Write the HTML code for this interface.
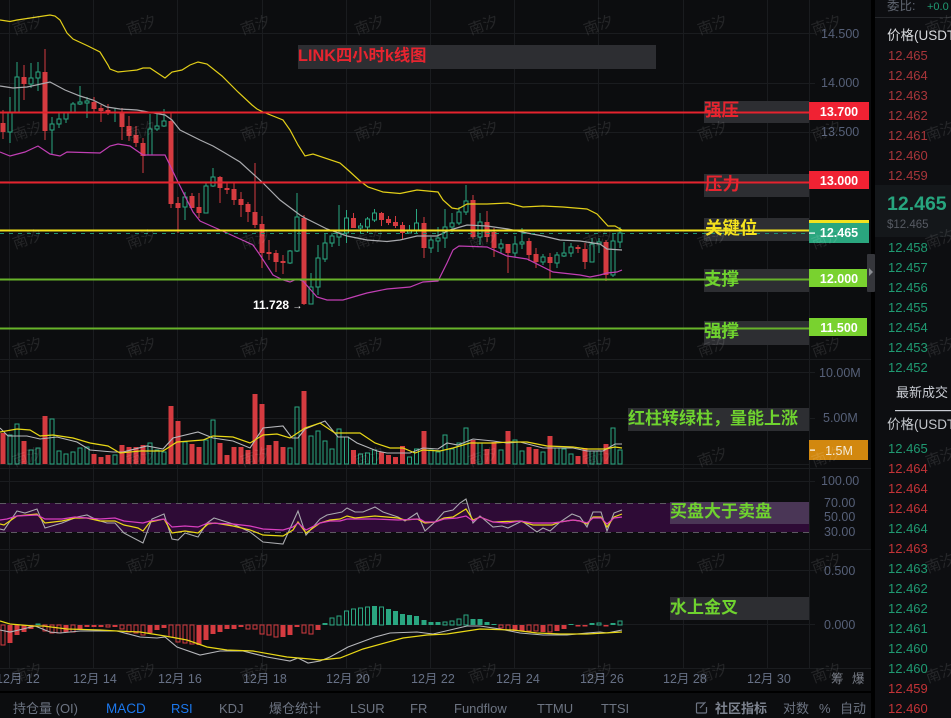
<!DOCTYPE html>
<html lang="zh"><head><meta charset="utf-8"><title>LINK</title>
<style>
html,body{margin:0;padding:0;background:#0c0d0f;overflow:hidden}
svg{display:block}
path{shape-rendering:crispEdges}
text{font-family:"Liberation Sans","Noto Sans CJK SC",sans-serif}
.ax{font-size:12.5px;fill:#566078}
.dt{font-size:12.5px;fill:#667085}
.tb{font-size:13px;fill:#6d7482}
.ob{font-size:13px}
.r{fill:#a8353a}.g{fill:#1f9a72}.r2{fill:#c23337}
.wm{font-size:15px;fill:#fff;fill-opacity:.1}
.an{font-size:17.5px;font-weight:700}
.lb{font-size:12.5px;font-weight:700;fill:#fff;text-anchor:middle}
</style></head><body>
<svg width="951" height="718" viewBox="0 0 951 718" xmlns="http://www.w3.org/2000/svg">
<rect width="951" height="718" fill="#0c0d0f"/>
<!-- grid -->
<path d="M9.5 0V668M93.5 0V668M177.5 0V668M262.5 0V668M346.5 0V668M430.5 0V668M514.5 0V668M598.5 0V668M683.5 0V668M767.5 0V668M809.5 0V668" stroke="#1a1c1f" fill="none"/>
<path d="M0 33.5H815M0 83.5H815M0 132.5H815M0 181.5H809M0 359.5H871M0 372.5H815M0 418.5H815M0 464.5H809M0 468.5H871M0 481.5H815M0 549.5H871M0 570.5H815M0 624.5H815M0 668.5H871" stroke="#1a1c1f" fill="none"/>
<!-- right/bottom dividers -->
<rect x="871" y="0" width="4" height="718" fill="#000"/>
<rect x="0" y="691" width="871" height="2" fill="#000"/>
<!-- RSI band -->
<rect x="0" y="503" width="809" height="29" fill="#2e0b36"/>
<path d="M0 503.5H809M0 532.5H809" stroke="#5d5a62" stroke-dasharray="6 5" fill="none"/>
<!-- annotation boxes -->
<g fill="#2d2e32">
<rect x="298" y="45" width="358" height="24"/>
<rect x="704" y="101" width="105" height="22"/>
<rect x="704" y="174" width="105" height="23"/>
<rect x="704" y="218" width="105" height="23"/>
<rect x="704" y="269" width="105" height="23"/>
<rect x="704" y="321" width="105" height="24"/>
<rect x="628" y="408" width="181" height="23"/>
<rect x="670" y="597" width="139" height="23"/>
</g>
<rect x="670" y="502" width="139" height="22" fill="#4a3656"/>
<!-- candles -->
<path fill="none" stroke="#2aa681" stroke-width="1.1" d="M10 97V143M17 62V113M31 63V88M38 62V91M52 117V154M59 113V128M66 112V123M73 102V113M80 86V105M87 97V118M115 108V122M150 114V155M157 113V131M164 109V127M185 192V220M206 183V213M213 168V187M290 250V264M297 193V252M311 273V304M318 245V295M325 233V262M332 233V247M339 205V246M346.5 210V243M360.5 223V233M367.5 217V233M374.5 209V222M409.5 225V233M416.5 209V233M431 237V253M438 227V252M445 209V248M452 213V232M459 207V225M466 185V215M480 213V245M501 239V253M515 236V257M522 228V249M543 254V265M557 252V268M564 242V257M571 243V257M592 238V262M599 238V253M613 233V277M620 227V248"/>
<path fill="#0c0d0f" stroke="#2aa681" stroke-width="1.1" d="M8 113h4v19h-4zM15 77h4v35h-4zM29 78h4v6h-4zM36 72h4v6h-4zM50 124h4v6h-4zM57 119h4v5h-4zM64 113h4v6h-4zM71 104h4v8h-4zM78 102h4v2h-4zM85 101h4v2h-4zM113 112h4v1h-4zM148 129h4v26h-4zM155 126h4v3h-4zM162 121h4v5h-4zM183 197h4v10h-4zM204 186h4v27h-4zM211 177h4v9h-4zM288 251h4v12h-4zM295 217h4v34h-4zM309 287h4v17h-4zM316 258h4v29h-4zM323 243h4v16h-4zM330 236h4v7h-4zM337 233h4v4h-4zM344.5 218h4v15h-4zM358.5 226h4v2h-4zM365.5 219h4v8h-4zM372.5 213h4v7h-4zM407.5 230h4v3h-4zM414.5 223h4v7h-4zM429 240h4v8h-4zM436 238h4v3h-4zM443 227h4v11h-4zM450 223h4v4h-4zM457 212h4v11h-4zM464 201h4v11h-4zM478 222h4v15h-4zM499 244h4v4h-4zM513 244h4v9h-4zM520 242h4v2h-4zM541 257h4v5h-4zM555 255h4v8h-4zM562 253h4v3h-4zM569 247h4v6h-4zM590 244h4v18h-4zM597 242h4v2h-4zM611 241h4v34h-4zM618 233h4v9h-4z"/>
<path fill="none" stroke="#d53b40" stroke-width="1.1" d="M3 110V139M24 65V100M45 49V140M94 97V113M101 105V122M108 104V115M122 108V140M129 116V141M136 126V147M143 138V173M171 113V208M178 197V233M192 193V208M199 193V218M220 176V203M227 182V194M234 182V205M241 192V217M248 202V222M255 163V228M262 216V268M269 240V260M276 250V272M283 255V274M304 215V305M353.5 213V228M381.5 212V226M388.5 216V225M395.5 216V228M402.5 222V240M424 217V258M473 195V239M487 211V242M494 228V257M508 244V273M529 238V261M536 248V268M550 253V279M578 245V253M585 243V269M606 240V281"/>
<path fill="#d53b40" d="M.5 123h5v9h-5zM21.5 77h5v7h-5zM42.5 72h5v59h-5zM91.5 102h5v7h-5zM98.5 108h5v3h-5zM105.5 110h5v2h-5zM119.5 112h5v15h-5zM126.5 126h5v10h-5zM133.5 135h5v8h-5zM140.5 143h5v13h-5zM168.5 121h5v83h-5zM175.5 203h5v5h-5zM189.5 196h5v12h-5zM196.5 207h5v6h-5zM217.5 177h5v11h-5zM224.5 188h5v2h-5zM231.5 189h5v11h-5zM238.5 199h5v6h-5zM245.5 204h5v8h-5zM252.5 212h5v13h-5zM259.5 224h5v29h-5zM266.5 252h5v2h-5zM273.5 253h5v9h-5zM280.5 261h5v2h-5zM301.5 218h5v86h-5zM351 218h5v10h-5zM379 213h5v7h-5zM386 219h5v4h-5zM393 222h5v4h-5zM400 225h5v8h-5zM421.5 223h5v25h-5zM470.5 200h5v37h-5zM484.5 222h5v15h-5zM491.5 232h5v16h-5zM505.5 244h5v9h-5zM526.5 241h5v14h-5zM533.5 254h5v8h-5zM547.5 257h5v6h-5zM575.5 247h5v2h-5zM582.5 249h5v13h-5zM603.5 242h5v33h-5z"/>
<!-- BOLL -->
<polyline fill="none" stroke="#e3cf18" stroke-width="1.2" points="0,20 10,21.5 17,20 50,15 55,16 60,20 67,33 73,39 88,46 100,52 108,65 110,69 118,72 137,70 143,68 150,68 165,78 172,72 182,70 190,65 198,62 207,64 222,76 238,92 252,105 257,109 263,112 283,120 290,130 298,145 305,156 313,154 340,163 348,170 360,181 368,187 383,192 400,193.5 417,190 438,192 443,200 452,208 458,209 467,204 487,204 508,203 523,207 543,206 563,207 587,209 597,214 608,226 615,226 622,230"/>
<polyline fill="none" stroke="#a9aaae" stroke-width="1.2" points="0,86 13,88 27,87 50,82 65,90 80,96 93,100 107,107 120,109 137,110 165,115 172,120 180,130 200,140 213,146 225,153 240,162 262,182 280,200 300,215 305,218 327,229 347,236 367,240 387,241.5 400,240 417,236 437,236 450,230 467,225 487,226 508,229 527,233 543,236 560,240 580,241 600,244 607,249 622,250"/>
<polyline fill="none" stroke="#c13fb4" stroke-width="1.2" points="0,152 10,156 25,152 38,146 50,154 60,156 67,152 100,153 110,146 118,144 130,146 143,155 165,155 177,180 193,212 200,221 227,233 253,245 260,255 273,275 283,280 290,282 297,279 303,281 317,297 327,300 343,300 360,295 367,293 387,289 410,287 423,282 438,281 447,263 453,250 459,246 487,247 507,256 527,259 553,272 580,275 590,277 600,275 607,273 617,272 622,270"/>
<!-- level lines -->
<path d="M0 230.5H809" stroke="#f2e11d" stroke-width="2" fill="none"/>
<path d="M0 233.5H809" stroke="#1d8f70" stroke-dasharray="4 5" fill="none"/>
<path d="M0 112.5H809M0 182.5H809" stroke="#e5232e" stroke-width="2" fill="none"/>
<path d="M0 279.5H809M0 328.5H809" stroke="#67b32a" stroke-width="2" fill="none"/>
<text x="253" y="309" font-size="12" font-weight="700" fill="#fff">11.728 <tspan font-size="10">→</tspan></text>
<!-- volume -->
<path fill="#d53b40" d="M.5 433h5V464h-5zM21.5 441h5V464h-5zM42.5 416h5V464h-5zM91.5 454h5V464h-5zM98.5 457h5V464h-5zM105.5 455h5V464h-5zM119.5 445h5V464h-5zM126.5 447h5V464h-5zM133.5 447h5V464h-5zM140.5 445h5V464h-5zM168.5 406h5V464h-5zM175.5 421h5V464h-5zM189.5 444h5V464h-5zM196.5 447h5V464h-5zM217.5 443h5V464h-5zM224.5 455h5V464h-5zM231.5 447h5V464h-5zM238.5 447h5V464h-5zM245.5 450h5V464h-5zM252.5 394h5V464h-5zM259.5 404h5V464h-5zM266.5 445h5V464h-5zM273.5 441h5V464h-5zM280.5 447h5V464h-5zM301.5 391h5V464h-5zM351 450h5V464h-5zM379 452h5V464h-5zM386 455h5V464h-5zM393 457h5V464h-5zM400 446h5V464h-5zM421.5 431h5V464h-5zM470.5 440h5V464h-5zM484.5 449h5V464h-5zM491.5 442h5V464h-5zM505.5 431h5V464h-5zM526.5 447h5V464h-5zM533.5 449h5V464h-5zM547.5 436h5V464h-5zM575.5 456h5V464h-5zM582.5 448h5V464h-5zM603.5 444h5V464h-5z"/>
<path fill="none" stroke="#2aa681" stroke-width="1.1" d="M8 435h4V464h-4zM15 424h4V464h-4zM29 450h4V464h-4zM36 448h4V464h-4zM50 419h4V464h-4zM57 451h4V464h-4zM64 454h4V464h-4zM71 452h4V464h-4zM78 448h4V464h-4zM85 447h4V464h-4zM113 455h4V464h-4zM148 443h4V464h-4zM155 450h4V464h-4zM162 452h4V464h-4zM183 442h4V464h-4zM204 440h4V464h-4zM211 420h4V464h-4zM288 448h4V464h-4zM295 407h4V464h-4zM309 436h4V464h-4zM316 431h4V464h-4zM323 441h4V464h-4zM330 449h4V464h-4zM337 429h4V464h-4zM344.5 437h4V464h-4zM358.5 454h4V464h-4zM365.5 453h4V464h-4zM372.5 450h4V464h-4zM407.5 457h4V464h-4zM414.5 449h4V464h-4zM429 450h4V464h-4zM436 452h4V464h-4zM443 435h4V464h-4zM450 449h4V464h-4zM457 443h4V464h-4zM464 428h4V464h-4zM478 443h4V464h-4zM499 450h4V464h-4zM513 440h4V464h-4zM520 451h4V464h-4zM541 452h4V464h-4zM555 448h4V464h-4zM562 449h4V464h-4zM569 454h4V464h-4zM590 451h4V464h-4zM597 451h4V464h-4zM611 428h4V464h-4zM618 450h4V464h-4z"/>
<polyline fill="none" stroke="#b6b7bb" stroke-width="1.1" points="0,428 8,436 27,436 40,439 57,437 77,442 90,450 113,452 123,452 147,446 163,449 173,438 198,432 213,438 233,441 250,448 263,428 283,426 292,438 298,438 305,429 320,423 325,421 338,437 348,437 357,443 377,451 387,453 410,453 423,448 438,449 447,443 458,445 473,439 493,441 507,443 520,442 543,448 573,448 587,451 603,451 615,444 622,444"/>
<polyline fill="none" stroke="#e9d816" stroke-width="1.2" points="0,432 17,429 30,430 40,436 53,435 73,438 90,443 108,446 120,453 140,451 163,451 177,442 203,440 213,436 233,437 250,443 263,435 277,434 290,438 305,428 320,423 335,433 360,433 375,443 390,448 403,448 415,453 423,450 440,451 453,448 470,443 493,443 510,442 527,442 547,446 573,447 587,449 605,449 615,447 622,448"/>
<!-- RSI lines -->
<polyline fill="none" stroke="#a9aaae" stroke-width="1.1" points="0,529 4,530 17,511 25,513 37,509 45,528 62,523 77,517 87,515 97,520 107,523 115,523 124,533 143,543 152,519 164,514 172,539 178,540 185,533 198,537 207,523 214,518 233,524 250,532 263,542 283,544 298,511 306,535 320,519 327,515 342,512 347,508 355,512 363,512 375,507 383,512 398,517 405,521 417,513 425,531 435,522 444,512 453,510 460,503 466,499 473,523 480,516 493,527 502,526 508,528 522,521 537,532 543,528 550,531 560,522 572,514 580,517 587,527 593,512 601,512 607,531 614,513 622,510"/>
<polyline fill="none" stroke="#e9d816" stroke-width="1.2" points="0,524 4,525 17,516 37,514 45,523 62,521 75,518 87,518 100,521 115,521 124,525 138,528 143,531 150,522 164,519 172,533 185,531 198,533 208,524 215,523 233,526 250,530 263,535 283,536 293,530 298,522 306,533 320,523 330,520 340,519 347,516 355,518 375,516 398,518 405,520 417,519 425,523 435,522 444,518 453,517 466,509 473,520 480,517 493,522 520,521 533,525 552,525 560,522 573,520 580,521 587,524 593,517 601,517 607,527 614,517 622,514"/>
<polyline fill="none" stroke="#d93fc0" stroke-width="1.2" points="0,520 7,519 17,516 37,515 45,519 62,519 75,517 87,518 100,519 115,518 124,521 143,523 150,521 164,519 172,527 185,526 198,527 208,523 233,524 250,526 263,529 283,530 293,527 298,523 306,530 320,523 330,521 340,521 347,519 375,519 398,520 420,519 425,522 435,522 444,519 457,518 466,516 473,521 480,517 493,522 507,523 520,521 533,523 552,523 560,522 573,520 580,521 587,523 593,518 601,518 607,524 614,518 622,517"/>
<!-- MACD hist -->
<path fill="#d53b40" d="M7.5 625h5v18h-5zM14.5 625h5v10h-5zM21.5 625h5v7h-5zM28.5 625h5v4h-5zM63.5 625h5v7h-5zM77.5 625h5v5h-5zM84.5 625h5v2h-5zM91.5 625h5v2h-5zM98.5 625h5v2h-5zM112.5 625h5v2h-5zM147.5 625h5v8h-5zM154.5 625h5v5h-5zM161.5 625h5v3h-5zM196.5 625h5v20h-5zM203.5 625h5v15h-5zM210.5 625h5v9h-5zM217.5 625h5v7h-5zM224.5 625h5v4h-5zM231.5 625h5v4h-5zM238.5 625h5v2h-5zM280.5 625h5v12h-5zM287.5 625h5v10h-5zM294.5 625h5v2h-5zM315.5 625h5v5h-5zM512.5 625h5v6h-5zM519.5 625h5v6h-5zM540.5 625h5v7h-5zM554.5 625h5v6h-5zM561.5 625h5v4h-5zM575.5 625h5v1.5h-5zM582.5 625h5v1.5h-5zM603.5 625h5v1.5h-5z"/>
<path fill="none" stroke="#d53b40" stroke-width="1.1" d="M1 625h4v20h-4zM43 625h4v6h-4zM50 625h4v8h-4zM57 625h4v8h-4zM71 625h4v7h-4zM106 625h4v2h-4zM120 625h4v4h-4zM127 625h4v7h-4zM134 625h4v8h-4zM141 625h4v10h-4zM169 625h4v12h-4zM176 625h4v17h-4zM183 625h4v18h-4zM190 625h4v19h-4zM246 625h4v4h-4zM253 625h4v4h-4zM260 625h4v9h-4zM267 625h4v10h-4zM274 625h4v12h-4zM302 625h4v8h-4zM309 625h4v9h-4zM499 625h4v3h-4zM506 625h4v5h-4zM527 625h4v6h-4zM534 625h4v6h-4zM548 625h4v7h-4z"/>
<path fill="#2aa681" d="M35.5 623.5h5v1.5h-5zM322.5 623h5v2h-5zM372 606h5v19h-5zM386 609h5v16h-5zM393 611h5v14h-5zM400 614h5v11h-5zM407 615h5v10h-5zM414 616h5v9h-5zM421.5 620h5v5h-5zM428.5 622h5v3h-5zM435.5 622h5v3h-5zM470.5 619h5v6h-5zM477.5 619h5v6h-5zM484.5 622h5v3h-5zM491.5 624h5v1h-5zM568.5 624h5v1h-5zM589.5 623h5v2h-5zM610.5 623h5v2h-5z"/>
<path fill="none" stroke="#2aa681" stroke-width="1.1" d="M330 618h4v7h-4zM337 616h4v9h-4zM344.5 611h4v14h-4zM351.5 609h4v16h-4zM358.5 608h4v17h-4zM365.5 607h4v18h-4zM379.5 607h4v18h-4zM443 622h4v3h-4zM450 621h4v4h-4zM457 619h4v6h-4zM464 615h4v10h-4zM597 623h4v2h-4zM618 621h4v4h-4z"/>
<polyline fill="none" stroke="#b6b7bb" stroke-width="1.1" points="0,630 10,632 23,629 35,626 50,632 60,633 80,631 117,631 140,637 157,638 165,637 177,647 200,655 220,651 243,651 267,657 290,661 298,658 308,663 320,661 330,657 348,647 375,637 390,633 417,632 433,634 467,626 480,626 500,629 520,633 543,635 567,635 587,633 600,632 607,633 622,630"/>
<polyline fill="none" stroke="#e9d816" stroke-width="1.2" points="0,621 10,624 33,626 43,626 67,629 100,630 117,631 140,632 165,636 187,640 207,647 227,650 253,651 287,657 310,659 320,660 340,658 363,649 403,638 427,635 447,634 480,629 513,630 537,633 560,634 587,634 622,632"/>
<!-- annotations text -->
<text x="298" y="61" class="an" fill="#e8242f" style="font-size:16.3px">LINK四小时k线图</text>
<text x="704" y="116" class="an" fill="#e8242f">强压</text>
<text x="705" y="190" class="an" fill="#e8242f">压力</text>
<text x="705" y="234" class="an" fill="#f3e21e">关键位</text>
<text x="704" y="285" class="an" fill="#6fd32f">支撑</text>
<text x="704" y="337" class="an" fill="#6fd32f">强撑</text>
<text x="628" y="424" class="an" fill="#6fd32f" style="font-size:17px">红柱转绿柱，量能上涨</text>
<text x="670" y="517" class="an" fill="#6fd32f" style="font-size:17px">买盘大于卖盘</text>
<text x="670" y="613" class="an" fill="#6fd32f" style="font-size:17px">水上金叉</text>
<!-- axis labels -->
<text x="821" y="38" class="ax">14.500</text>
<text x="821" y="87" class="ax">14.000</text>
<text x="821" y="136" class="ax">13.500</text>
<text x="819" y="377" class="ax">10.00M</text>
<text x="823" y="422" class="ax">5.00M</text>
<text x="821" y="485" class="ax">100.00</text>
<text x="824" y="507" class="ax">70.00</text>
<text x="824" y="521" class="ax">50.00</text>
<text x="824" y="536" class="ax">30.00</text>
<text x="824" y="575" class="ax">0.500</text>
<text x="824" y="629" class="ax">0.000</text>
<!-- price labels -->
<rect x="809" y="102" width="60" height="18" fill="#f02233"/><text x="839" y="116" class="lb">13.700</text>
<rect x="809" y="171" width="60" height="18" fill="#f02233"/><text x="839" y="185" class="lb">13.000</text>
<rect x="809" y="220" width="60" height="3" fill="#f3e21e"/>
<rect x="809" y="223" width="60" height="20" fill="#2aa67e"/><text x="839" y="237" class="lb">12.465</text>
<rect x="809" y="232.5" width="6" height="1.2" fill="#fff"/>
<rect x="809" y="269" width="58" height="18" fill="#79d22f"/><text x="839" y="283" class="lb">12.000</text>
<rect x="809" y="318" width="58" height="18" fill="#79d22f"/><text x="839" y="332" class="lb">11.500</text>
<rect x="809" y="440" width="59" height="20" fill="#d2880f"/><rect x="810" y="449.5" width="5" height="1.2" fill="#fff"/><text x="839" y="455" class="lb" style="font-weight:400;fill:#f3ead8">1.5M</text>
<!-- handle -->
<rect x="867" y="254" width="8" height="38" rx="1" fill="#35363b"/><path d="M869 268l4 4-4 4z" fill="#8a8c92" style="shape-rendering:auto"/>
<!-- dates -->
<text x="-4" y="683" class="dt">12月 12</text>
<text x="73" y="683" class="dt">12月 14</text>
<text x="158" y="683" class="dt">12月 16</text>
<text x="243" y="683" class="dt">12月 18</text>
<text x="326" y="683" class="dt">12月 20</text>
<text x="411" y="683" class="dt">12月 22</text>
<text x="496" y="683" class="dt">12月 24</text>
<text x="580" y="683" class="dt">12月 26</text>
<text x="663" y="683" class="dt">12月 28</text>
<text x="747" y="683" class="dt">12月 30</text>
<text x="831" y="683" class="dt" style="fill:#777c86">筹</text>
<text x="852" y="683" class="dt" style="fill:#777c86">爆</text>
<!-- tabs -->
<text x="13" y="713" class="tb">持仓量 (OI)</text>
<text x="106" y="713" class="tb" style="fill:#1c78ee;font-size:13.5px">MACD</text>
<text x="171" y="713" class="tb" style="fill:#1c78ee">RSI</text>
<text x="219" y="713" class="tb">KDJ</text>
<text x="269" y="713" class="tb">爆仓统计</text>
<text x="350" y="713" class="tb">LSUR</text>
<text x="410" y="713" class="tb">FR</text>
<text x="454" y="713" class="tb">Fundflow</text>
<text x="537" y="713" class="tb">TTMU</text>
<text x="601" y="713" class="tb">TTSI</text>
<path d="M704 703h-6.500a1 1 0 0 0-1 1v8a1 1 0 0 0 1 1h8a1 1 0 0 0 1-1v-5M700 708l5.500-6" fill="none" stroke="#6d7482" stroke-width="1.2" style="shape-rendering:auto"/>
<text x="715" y="713" class="tb" style="font-weight:700;fill:#7d838f">社区指标</text>
<text x="783" y="713" class="tb">对数</text>
<text x="819" y="713" class="tb">%</text>
<text x="840" y="713" class="tb">自动</text>
<!-- order book -->
<rect x="875" y="0" width="76" height="718" fill="#0d0e11"/>
<path d="M875 17.500H951" stroke="#25272b"/>
<text x="887" y="10" font-size="12.500" fill="#5f6570">委比:</text><text x="927" y="10" font-size="11" fill="#1f9a72">+0.0</text>
<text x="887" y="40" font-size="13.500" fill="#d6d8dc">价格(USDT</text>
<g class="ob">
<text x="888" y="60" class="r">12.465</text>
<text x="888" y="80" class="r">12.464</text>
<text x="888" y="100" class="r">12.463</text>
<text x="888" y="120" class="r">12.462</text>
<text x="888" y="140" class="r">12.461</text>
<text x="888" y="160" class="r">12.460</text>
<text x="888" y="180" class="r">12.459</text>
<rect x="875" y="185" width="76" height="52" fill="#14171a"/>
<text x="887" y="210" font-size="19.500" font-weight="700" fill="#27a57e">12.465</text>
<text x="887" y="228" font-size="11.500" fill="#565a62">$12.465</text>
<text x="888" y="252" class="g">12.458</text>
<text x="888" y="272" class="g">12.457</text>
<text x="888" y="292" class="g">12.456</text>
<text x="888" y="312" class="g">12.455</text>
<text x="888" y="332" class="g">12.454</text>
<text x="888" y="352" class="g">12.453</text>
<text x="888" y="372" class="g">12.452</text>
<text x="896" y="397" font-size="13" fill="#c8cbd2">最新成交</text>
<rect x="895" y="410" width="56" height="1.200" fill="#c8cbd2"/>
<text x="887" y="429" font-size="13.500" fill="#c2c5ca">价格(USDT</text>
<text x="888" y="453" class="g">12.465</text>
<text x="888" y="473" class="r2">12.464</text>
<text x="888" y="493" class="r2">12.464</text>
<text x="888" y="513" class="r2">12.464</text>
<text x="888" y="533" class="g">12.464</text>
<text x="888" y="553" class="r2">12.463</text>
<text x="888" y="573" class="g">12.463</text>
<text x="888" y="593" class="g">12.462</text>
<text x="888" y="613" class="g">12.462</text>
<text x="888" y="633" class="g">12.461</text>
<text x="888" y="653" class="g">12.460</text>
<text x="888" y="673" class="g">12.460</text>
<text x="888" y="693" class="r2">12.459</text>
<text x="888" y="713" class="r2">12.460</text>
</g>
<!-- watermarks -->
<g class="wm">
<text transform="translate(15,35) rotate(-20)">南汐</text><text transform="translate(129,35) rotate(-20)">南汐</text><text transform="translate(243,35) rotate(-20)">南汐</text><text transform="translate(357,35) rotate(-20)">南汐</text><text transform="translate(471,35) rotate(-20)">南汐</text><text transform="translate(586,35) rotate(-20)">南汐</text><text transform="translate(700,35) rotate(-20)">南汐</text><text transform="translate(814,35) rotate(-20)">南汐</text><text transform="translate(928,35) rotate(-20)">南汐</text>
<text transform="translate(15,141) rotate(-20)">南汐</text><text transform="translate(129,141) rotate(-20)">南汐</text><text transform="translate(243,141) rotate(-20)">南汐</text><text transform="translate(357,141) rotate(-20)">南汐</text><text transform="translate(471,141) rotate(-20)">南汐</text><text transform="translate(586,141) rotate(-20)">南汐</text><text transform="translate(700,141) rotate(-20)">南汐</text><text transform="translate(814,141) rotate(-20)">南汐</text><text transform="translate(928,141) rotate(-20)">南汐</text>
<text transform="translate(15,249) rotate(-20)">南汐</text><text transform="translate(129,249) rotate(-20)">南汐</text><text transform="translate(243,249) rotate(-20)">南汐</text><text transform="translate(357,249) rotate(-20)">南汐</text><text transform="translate(471,249) rotate(-20)">南汐</text><text transform="translate(586,249) rotate(-20)">南汐</text><text transform="translate(700,249) rotate(-20)">南汐</text><text transform="translate(814,249) rotate(-20)">南汐</text><text transform="translate(928,249) rotate(-20)">南汐</text>
<text transform="translate(15,357) rotate(-20)">南汐</text><text transform="translate(129,357) rotate(-20)">南汐</text><text transform="translate(243,357) rotate(-20)">南汐</text><text transform="translate(357,357) rotate(-20)">南汐</text><text transform="translate(471,357) rotate(-20)">南汐</text><text transform="translate(586,357) rotate(-20)">南汐</text><text transform="translate(700,357) rotate(-20)">南汐</text><text transform="translate(814,357) rotate(-20)">南汐</text><text transform="translate(928,357) rotate(-20)">南汐</text>
<text transform="translate(15,467) rotate(-20)">南汐</text><text transform="translate(129,467) rotate(-20)">南汐</text><text transform="translate(243,467) rotate(-20)">南汐</text><text transform="translate(357,467) rotate(-20)">南汐</text><text transform="translate(471,467) rotate(-20)">南汐</text><text transform="translate(586,467) rotate(-20)">南汐</text><text transform="translate(700,467) rotate(-20)">南汐</text><text transform="translate(814,467) rotate(-20)">南汐</text><text transform="translate(928,467) rotate(-20)">南汐</text>
<text transform="translate(15,573) rotate(-20)">南汐</text><text transform="translate(129,573) rotate(-20)">南汐</text><text transform="translate(243,573) rotate(-20)">南汐</text><text transform="translate(357,573) rotate(-20)">南汐</text><text transform="translate(471,573) rotate(-20)">南汐</text><text transform="translate(586,573) rotate(-20)">南汐</text><text transform="translate(700,573) rotate(-20)">南汐</text><text transform="translate(814,573) rotate(-20)">南汐</text><text transform="translate(928,573) rotate(-20)">南汐</text>
<text transform="translate(15,683) rotate(-20)">南汐</text><text transform="translate(129,683) rotate(-20)">南汐</text><text transform="translate(243,683) rotate(-20)">南汐</text><text transform="translate(357,683) rotate(-20)">南汐</text><text transform="translate(471,683) rotate(-20)">南汐</text><text transform="translate(586,683) rotate(-20)">南汐</text><text transform="translate(700,683) rotate(-20)">南汐</text><text transform="translate(814,683) rotate(-20)">南汐</text><text transform="translate(928,683) rotate(-20)">南汐</text>
</g>
</svg>
</body></html>
